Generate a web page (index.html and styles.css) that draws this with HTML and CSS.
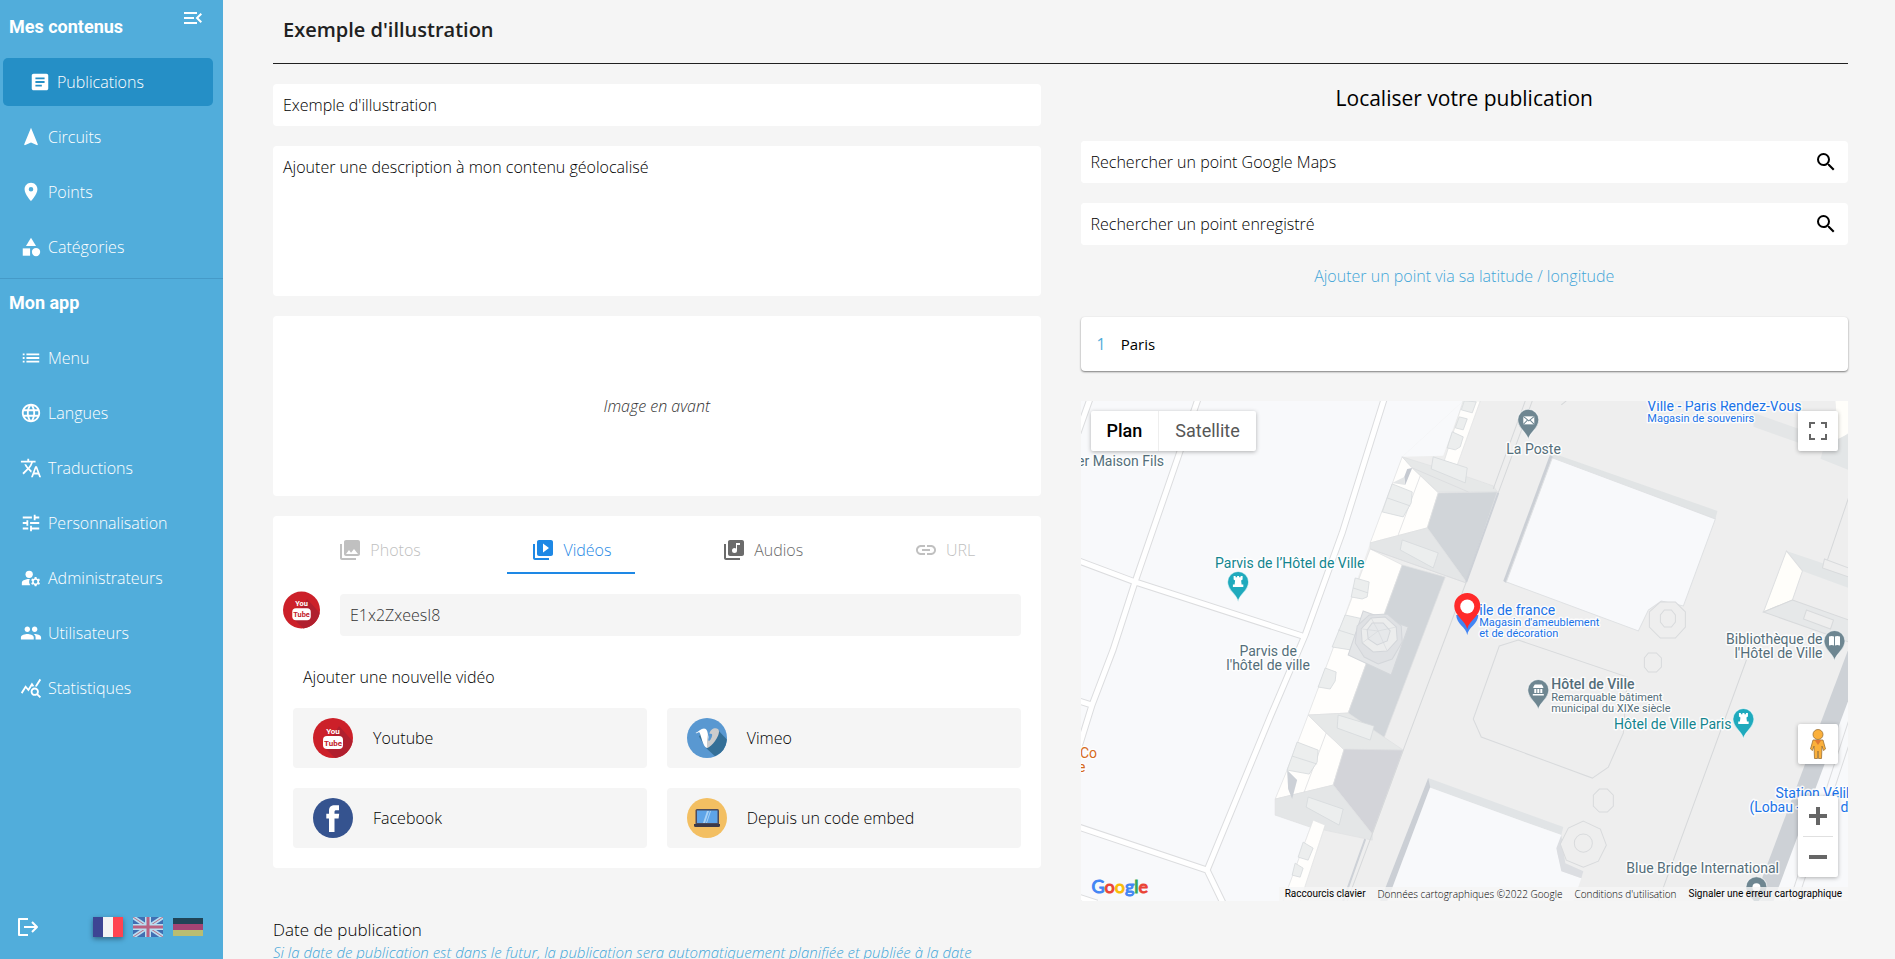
FILE: index.html
```html
<!DOCTYPE html>
<html lang="fr">
<head>
<meta charset="utf-8">
<title>Exemple d'illustration</title>
<link rel="stylesheet" href="styles.css">
</head>
<body>
<svg class="defs" aria-hidden="true">
  <symbol id="i-search" viewBox="0 0 24 24"><path d="M15.500 14h-.79l-.28-.27A6.470 6.470 0 0 0 16 9.500 6.500 6.500 0 1 0 9.500 16c1.610 0 3.090-.59 4.230-1.570l.27.28v.79l5 4.990L20.490 19l-4.990-5zm-6 0C7.010 14 5 11.990 5 9.500S7.010 5 9.500 5 14 7.010 14 9.500 11.990 14 9.500 14z"/></symbol>
  <symbol id="i-pin" viewBox="-11 -11 22 31"><path d="M0 19.500C-1.500 12-10.500 9-10.500 0a10.500 10.500 0 0 1 21 0C10.500 9 1.500 12 0 19.500z" stroke="#fff" stroke-opacity=".6"/></symbol>
  <symbol id="i-rook" viewBox="-11 -11 22 31"><use href="#i-pin" x="-11" y="-11" width="22" height="31"/><path d="M-4.500-6h2v1.300h1.500V-6h2v1.300h1.500V-6h2v3.500L3-1.500l.5 4h1.700V5h-10.400V2.500h1.700l.5-4-1.500-1z" fill="#fff"/></symbol>
</svg>
<div class="app">
  <aside class="sidebar">
    <div class="side-top">
      <h2 class="side-title">Mes contenus</h2>
      <button class="collapse" aria-label="Réduire le menu"><svg viewBox="0 0 24 24"><path d="M3 18h13v-2H3v2zm0-5h10v-2H3v2zm0-7v2h13V6H3zm18 9.590L17.420 12 21 8.410 19.590 7l-5 5 5 5L21 15.590z"/></svg></button>
    </div>
    <nav class="nav">
      <a class="nav-item active" href="#"><svg viewBox="0 0 24 24"><path d="M19 3H5c-1.100 0-2 .9-2 2v14c0 1.100.9 2 2 2h14c1.100 0 2-.9 2-2V5c0-1.100-.9-2-2-2zm-5 14H7v-2h7v2zm3-4H7v-2h10v2zm0-4H7V7h10v2z"/></svg>Publications</a>
      <a class="nav-item" href="#"><svg viewBox="0 0 24 24"><path d="M12 2L4.500 20.290l.71.71L12 18l6.790 3 .71-.71z"/></svg>Circuits</a>
      <a class="nav-item" href="#"><svg viewBox="0 0 24 24"><path d="M12 2C8.130 2 5 5.130 5 9c0 5.250 7 13 7 13s7-7.750 7-13c0-3.870-3.130-7-7-7zm0 9.500a2.500 2.500 0 0 1 0-5 2.500 2.500 0 0 1 0 5z"/></svg>Points</a>
      <a class="nav-item" href="#"><svg viewBox="0 0 24 24"><path d="M12 2l-5.500 9h11z"/><circle cx="17.500" cy="17.500" r="4.500"/><path d="M3 13.500h8v8H3z"/></svg>Catégories</a>
    </nav>
    <h2 class="side-title second">Mon app</h2>
    <nav class="nav">
      <a class="nav-item" href="#"><svg viewBox="0 0 24 24"><path d="M3 13h2v-2H3v2zm0 4h2v-2H3v2zm0-8h2V7H3v2zm4 4h14v-2H7v2zm0 4h14v-2H7v2zM7 7v2h14V7H7z"/></svg>Menu</a>
      <a class="nav-item" href="#"><svg viewBox="0 0 24 24"><path d="M11.990 2C6.470 2 2 6.480 2 12s4.470 10 9.990 10C17.520 22 22 17.520 22 12S17.520 2 11.990 2zm6.930 6h-2.950a15.650 15.650 0 0 0-1.380-3.560A8.030 8.030 0 0 1 18.920 8zM12 4.040c.83 1.200 1.480 2.530 1.910 3.960h-3.820c.43-1.430 1.080-2.760 1.910-3.960zM4.260 14a8.200 8.200 0 0 1 0-4h3.380a16.500 16.500 0 0 0 0 4H4.260zm.82 2h2.950c.32 1.250.78 2.450 1.380 3.560A7.990 7.990 0 0 1 5.080 16zm2.950-8H5.080a7.990 7.990 0 0 1 4.330-3.560A15.650 15.650 0 0 0 8.030 8zM12 19.960c-.83-1.200-1.480-2.530-1.910-3.960h3.820c-.43 1.430-1.080 2.760-1.910 3.960zM14.340 14H9.660a14.700 14.700 0 0 1 0-4h4.680a14.700 14.700 0 0 1 0 4zm.25 5.560c.6-1.110 1.060-2.310 1.380-3.560h2.950a8.030 8.030 0 0 1-4.330 3.560zM16.360 14a16.500 16.500 0 0 0 0-4h3.380a8.200 8.200 0 0 1 0 4h-3.380z"/></svg>Langues</a>
      <a class="nav-item" href="#"><svg viewBox="0 0 24 24"><path d="M12.870 15.070l-2.540-2.510.03-.03A17.520 17.520 0 0 0 14.070 6H17V4h-7V2H8v2H1v1.990h11.170C11.500 7.920 10.440 9.750 9 11.350 8.070 10.320 7.300 9.190 6.690 8h-2c.73 1.630 1.730 3.170 2.980 4.560l-5.090 5.020L4 19l5-5 3.110 3.110.76-2.040zM18.500 10h-2L12 22h2l1.120-3h4.750L21 22h2l-4.500-12zm-2.620 7l1.620-4.330L19.120 17h-3.240z"/></svg>Traductions</a>
      <a class="nav-item" href="#"><svg viewBox="0 0 24 24"><path d="M3 17v2h6v-2H3zM3 5v2h10V5H3zm10 16v-2h8v-2h-8v-2h-2v6h2zM7 9v2H3v2h4v2h2V9H7zm14 4v-2H11v2h10zm-6-4h2V7h4V5h-4V3h-2v6z"/></svg>Personnalisation</a>
      <a class="nav-item" href="#"><svg viewBox="0 0 24 24"><circle cx="10" cy="8" r="4"/><path d="M10.670 13.020C10.450 13.010 10.230 13 10 13c-2.420 0-4.680.67-6.610 1.820-.88.52-1.390 1.500-1.390 2.530V20h9.260a6.960 6.960 0 0 1-.59-6.980zM20.750 16c0-.22-.03-.42-.06-.63l1.140-1.010-1-1.730-1.450.49c-.32-.27-.68-.48-1.080-.63L18 11h-2l-.3 1.490c-.4.15-.76.36-1.080.63l-1.450-.49-1 1.730 1.140 1.010a3.700 3.700 0 0 0 0 1.260l-1.140 1.010 1 1.730 1.450-.49c.32.27.68.48 1.080.63L16 21h2l.3-1.490c.4-.15.76-.36 1.080-.63l1.450.49 1-1.730-1.140-1.010c.03-.21.06-.41.06-.63zM17 18a2 2 0 1 1 0-4 2 2 0 0 1 0 4z"/></svg>Administrateurs</a>
      <a class="nav-item" href="#"><svg viewBox="0 0 24 24"><path d="M16 11c1.660 0 2.990-1.340 2.990-3S17.660 5 16 5s-3 1.340-3 3 1.340 3 3 3zm-8 0c1.660 0 2.990-1.340 2.990-3S9.660 5 8 5 5 6.340 5 8s1.340 3 3 3zm0 2c-2.330 0-7 1.170-7 3.500V19h14v-2.500C15 14.170 10.330 13 8 13zm8 0c-.29 0-.62.02-.97.05 1.160.84 1.970 1.970 1.970 3.450V19h6v-2.500c0-2.330-4.670-3.500-7-3.500z"/></svg>Utilisateurs</a>
      <a class="nav-item" href="#"><svg viewBox="0 0 24 24"><path d="M19.880 18.470c.44-.7.700-1.510.700-2.390a4.500 4.500 0 1 0-4.500 4.500c.88 0 1.700-.26 2.390-.7L21.580 23 23 21.580l-3.120-3.110zm-3.800.11a2.500 2.500 0 1 1 0-5 2.500 2.500 0 0 1 0 5zm-.36-8.500c-.74.020-1.450.18-2.100.45l-.55-.83-3.800 6.180-3.010-3.520-3.630 5.810L1 17l5-8 3 3.500L13 6l2.720 4.080zm2.590.5c-.64-.28-1.330-.45-2.050-.49L21.380 2 23 3.180l-4.690 7.400z"/></svg>Statistiques</a>
    </nav>
    <div class="side-foot">
      <button class="logout" aria-label="Se déconnecter"><svg viewBox="0 0 22 22"><path d="M11 3H2v16h9M7 11h13M15 6l5 5-5 5" fill="none" stroke="#fff" stroke-width="2" stroke-linejoin="round"/></svg></button>
      <div class="flags">
        <button class="flag current" aria-label="Français"><svg viewBox="0 0 30 20"><path fill="#3d4593" d="M0 0h10v20H0z"/><path fill="#f3f3f3" d="M10 0h10v20H10z"/><path fill="#ff4450" d="M20 0h10v20H20z"/></svg></button>
        <button class="flag" aria-label="English"><svg viewBox="0 0 30 20"><path fill="#35479a" d="M0 0h30v20H0z"/><path d="M0 0l30 20M30 0L0 20" stroke="#fff" stroke-width="4"/><path d="M0 0l30 20M30 0L0 20" stroke="#ff4450" stroke-width="1"/><path d="M15 0v20M0 10h30" stroke="#fff" stroke-width="6"/><path d="M15 0v20M0 10h30" stroke="#ff3048" stroke-width="3"/></svg></button>
        <button class="flag" aria-label="Deutsch"><svg viewBox="0 0 30 20"><path fill="#000" d="M0 1h30v6H0z"/><path fill="#dc0030" d="M0 7h30v6H0z"/><path fill="#ffc82c" d="M0 13h30v6H0z"/></svg></button>
      </div>
    </div>
  </aside>

  <main class="main">
    <h1 class="page-title">Exemple d'illustration</h1>
    <div class="columns">
      <section class="col">
        <input class="field" type="text" aria-label="Titre" value="Exemple d'illustration">
        <textarea class="field area" aria-label="Description" placeholder="Ajouter une description à mon contenu géolocalisé"></textarea>
        <button class="cover">Image en avant</button>
        <div class="card">
          <div class="tabs" role="tablist">
            <button class="tab off" role="tab"><svg viewBox="0 0 24 24"><path d="M22 16V4c0-1.100-.9-2-2-2H8c-1.100 0-2 .9-2 2v12c0 1.100.9 2 2 2h12c1.100 0 2-.9 2-2zm-11-4l2.030 2.710L16 11l4 5H8l3-4zM2 6v14c0 1.100.9 2 2 2h14v-2H4V6H2z"/></svg>Photos</button>
            <button class="tab on" role="tab" aria-selected="true"><svg viewBox="0 0 24 24"><path d="M4 6H2v14c0 1.100.9 2 2 2h14v-2H4V6zm16-4H8c-1.100 0-2 .9-2 2v12c0 1.100.9 2 2 2h12c1.100 0 2-.9 2-2V4c0-1.100-.9-2-2-2zm-8 12.500v-9l6 4.500-6 4.500z"/></svg>Vidéos</button>
            <button class="tab" role="tab"><svg viewBox="0 0 24 24"><path d="M20 2H8c-1.100 0-2 .9-2 2v12c0 1.100.9 2 2 2h12c1.100 0 2-.9 2-2V4c0-1.100-.9-2-2-2zm-2 5h-3v5.500a2.500 2.500 0 1 1-2.500-2.500c.57 0 1.080.19 1.500.51V5h4v2zM4 6H2v14c0 1.100.9 2 2 2h14v-2H4V6z"/></svg>Audios</button>
            <button class="tab off" role="tab"><svg viewBox="0 0 24 24"><path d="M3.900 12c0-1.710 1.390-3.100 3.100-3.100h4V7H7c-2.760 0-5 2.240-5 5s2.240 5 5 5h4v-1.900H7c-1.710 0-3.100-1.390-3.100-3.100zM8 13h8v-2H8v2zm9-6h-4v1.900h4c1.710 0 3.100 1.390 3.100 3.100s-1.390 3.100-3.100 3.100h-4V17h4c2.760 0 5-2.240 5-5s-2.240-5-5-5z"/></svg>URL</button>
          </div>
          <div class="video-row">
            <svg class="video-logo" viewBox="0 0 40 40" role="img" aria-label="Youtube"><circle cx="20" cy="20" r="20" fill="#cc2029"/><path d="M26 8L39.500 23A20 20 0 0 1 22 39.900L12 30Z" fill="#b01f2e"/><text x="20" y="16" text-anchor="middle" class="yt-word" fill="#fff">You</text><rect x="10" y="18" width="20" height="13" rx="4" fill="#fff"/><text x="20" y="28" text-anchor="middle" class="yt-word" fill="#c3202c">Tube</text></svg>
            <input class="field muted" type="text" aria-label="Identifiant de la vidéo" value="E1x2ZxeesI8">
          </div>
          <h3 class="add-title">Ajouter une nouvelle vidéo</h3>
          <div class="sources">
            <button class="source"><svg viewBox="0 0 40 40" aria-hidden="true"><circle cx="20" cy="20" r="20" fill="#cc2029"/><path d="M26 8L39.500 23A20 20 0 0 1 22 39.900L12 30Z" fill="#b01f2e"/><text x="20" y="16" text-anchor="middle" class="yt-word" fill="#fff">You</text><rect x="10" y="18" width="20" height="13" rx="4" fill="#fff"/><text x="20" y="28" text-anchor="middle" class="yt-word" fill="#c3202c">Tube</text></svg>Youtube</button>
            <button class="source"><svg viewBox="0 0 40 40"><circle cx="20" cy="20" r="20" fill="#5998d1"/><path d="M30 11L39.900 21.500A20 20 0 0 1 28 38.300L18.500 29.500Z" fill="#346f97"/><path d="M20 12l-3-1.500-5 8 6 10h3z" fill="#346f97"/><path d="M8.500 15c3-1.500 5.500-4.500 8.500-4.500 3.500 0 3.500 4 4.500 8.500l-1.500 11c-4-.5-6-13-7.500-15.500-.7-.7-1.500 0-2.700.8z" fill="#fff"/><path d="M20 15.500v14.500c3 0 12-10 12-16.500 0-5-9-4-9.500 2.500 3-1 3.500 1 1.500 4.500-1.200 2.200-2.500 3.500-3 1-.4-2-.6-4-1-6z" fill="#ccc"/></svg>Vimeo</button>
            <button class="source"><svg viewBox="0 0 40 40"><circle cx="20" cy="20" r="20" fill="#35538f"/><path d="M16 34V20.500h-2.700v-4.800H16v-3.200C16 9 18 7.300 22 7.300h4v5h-2.700c-1.300 0-1.800.5-1.800 1.700v1.700h4.700l-.6 4.800h-4.100V34z" fill="#fff"/></svg>Facebook</button>
            <button class="source"><svg viewBox="0 0 40 40"><circle cx="20" cy="20" r="20" fill="#f3bf62"/><rect x="8.500" y="11" width="23.500" height="16" rx="1.500" fill="#4d4b5b"/><path d="M10 12.500h20.500v12.500H10z" fill="#5ea4e8"/><path d="M20 13l-4 12h2l4-12zM23 13l-4 12h1l4-12z" fill="#a9d2f6"/><path d="M7 26h26v1.500a1.500 1.500 0 0 1-1.500 1.500h-23A1.500 1.500 0 0 1 7 27.500z" fill="#3b3a4a"/></svg>Depuis un code embed</button>
          </div>
        </div>
        <div class="date">
          <h3 class="date-title">Date de publication</h3>
          <p class="date-help">Si la date de publication est dans le futur, la publication sera automatiquement planifiée et publiée à la date</p>
        </div>
      </section>

      <section class="col locate">
        <h2 class="locate-title">Localiser votre publication</h2>
        <div class="search"><input class="field" type="text" aria-label="Rechercher un point Google Maps" placeholder="Rechercher un point Google Maps"><button aria-label="Rechercher"><svg><use href="#i-search"/></svg></button></div>
        <div class="search"><input class="field" type="text" aria-label="Rechercher un point enregistré" placeholder="Rechercher un point enregistré"><button aria-label="Rechercher"><svg><use href="#i-search"/></svg></button></div>
        <a class="latlng" href="#">Ajouter un point via sa latitude / longitude</a>
        <div class="point"><span class="point-num">1</span><span>Paris</span></div>
        <div class="map">
          <svg class="map-canvas" viewBox="0 0 767 500" preserveAspectRatio="xMidYMid slice">
            <rect width="767" height="500" fill="#f8f9fb"/>
            <g fill="none" stroke="#dcdddf" stroke-width="7">
              <path d="M9-2L-3 32M117-2L54 181 32 249 11 304-2 346M303-2L261 132 224 234 189 316 126 469 142 502M-2 160L54 181 221 235M-2 300L11 304M-2 426L126 469M-2 496L16 502"/>
            </g>
            <path d="M9-2L-3 32M117-2L54 181 32 249 11 304-2 346M303-2L261 132 224 234 189 316 126 469 142 502M-2 160L54 181 221 235M-2 300L11 304M-2 426L126 469M-2 496L16 502" fill="none" stroke="#fff" stroke-width="5"/>
            <path d="M382 0L321 56 289 142 251 249 227 314 206 369 194 398V414L229 426 202 500H692L767 290V0z" fill="#eee"/>
            <path d="M382 0L362 55 321 56z" fill="#f8f9fb"/>
            <!-- street east of the building -->
            <path d="M767 299L692 500H767z" fill="#f8f9fb"/>
            <path d="M767 320L708 500M767 345L716 500" stroke="#dcdddf"/>
            <path d="M767 248L672 500H692L767 299z" fill="#cdd1d6"/>
            <!-- west wing walls -->
            <g stroke="#dfe1e3" stroke-width=".7">
              <path d="M382 0H399L376 64 363 60z" fill="#fffefc"/>
              <path d="M321 56L331 67 357 92 346 127 289 142z" fill="#fffefc"/>
              <path d="M321 56L350 65 386 76 412 85 416 91H357L331 67z" fill="#e6e8e8"/>
              <path d="M357 92L416 91 385 181 346 127z" fill="#d1d5d9"/>
              <path d="M289 142L346 127 385 181V182L289 148z" fill="#e4e6e7"/>
              <path d="M289 148L321 164 267 312 227 314z" fill="#fffefc"/>
              <path d="M321 164L364 176 302 339 267 312z" fill="#d1d5d9"/>
              <path d="M227 314L245 332 263 348 252 384 194 398 206 369z" fill="#fffefc"/>
              <path d="M227 314L267 312 322 349H263z" fill="#e6e8e8"/>
              <path d="M263 348L322 349 291 433 252 384z" fill="#d3d4d9"/>
              <path d="M194 398L252 384 291 433V439L229 426 194 414z" fill="#e4e6e7"/>
              <path d="M232 419L244 424 219 500H202z" fill="#fffefc"/>
              <path d="M339 75L317 134M245 332L223 391M331 67L387 91M289 148L385 182" fill="none" stroke="#d8dadc"/>
            </g>
            <path d="M326 68L331 67 324 84 323 76z" fill="#c6cad1"/>
            <path d="M323 76L324 84 311 82z" fill="#e4e6e7"/>
            <path d="M206 369L216 379 211 398 207 388z" fill="#cdd1d7"/>
            <g fill="#eceeee" stroke="#d6d9dc" stroke-width=".8">
              <path d="M311 83L331 91 330 102 322 116 301 111zM306 97L329 105"/>
              <path d="M352 56L386 67 384 82 350 68z"/>
              <path d="M321 139L357 152 352 167 319 149z"/>
              <path d="M274 177L288 181 286 196 281 198 270 196zM272 187L287 192"/>
              <path d="M264 214L282 218 270 249 251 246zM257 229L276 235"/>
              <path d="M244 267L255 271 254 280 249 288 237 286z"/>
              <path d="M216 341L237 349 236 361 228 373 206 369zM211 355L236 363"/>
              <path d="M257 314L293 325 289 339 256 327z"/>
              <path d="M227 396L262 408 258 424 225 406z"/>
              <path d="M222 441L232 447 227 459 217 456z"/>
              <path d="M214 462L222 467 219 476 211 474z"/>
              <path d="M383 0L395 1 391 12 380 9zM378 16L386 18 382 29 374 27zM371 31L382 36 379 46 374 49 366 47z"/>
            </g>
            <!-- dome -->
            <g stroke="#d3d6da">
              <path d="M282 210L327 226 310 274 267 254z" fill="#e4e6e8"/>
              <path d="M288 214L306 213 320 225 321 241 311 258 297 263 283 256 274 242 276 225z" fill="#dfe1e4"/>
              <path d="M290 217L304 216 315 226 316 239 306 250 292 251 281 242 280 228z" fill="#eceded"/>
              <path d="M291 222H302L309 230 306 240 296 244 287 238 286 229z" fill="#e6e8ea"/>
              <path d="M297 230L281 228M297 230L290 217M297 230L315 226M297 230L306 250M297 230L281 242" stroke-width=".6"/>
            </g>
            <path d="M385 181L322 349 291 433 266 500M444 0L412 88M451 0L417 92M665 259L577 500M767 97L746 159M480 4L485 0" fill="none" stroke="#d6d8da"/>
            <path d="M284 438L262 500M417 92L385 181" stroke="#cdd1d7" stroke-width="2"/>
            <!-- courtyards -->
            <path d="M470 52L636 110 634 118 470 57z" fill="#e1e4e5"/>
            <path d="M469 53L472 57 425 182 422 180z" fill="#cbcfd5"/>
            <path d="M471 57L634 118 602 205 580 200 567 209 557 230 425 181z" fill="#f8f9fb" stroke="#dfe1e3"/>
            <path d="M347 377L482 426 480 434 347 386z" fill="#e1e4e6"/>
            <path d="M347 386L480 434 476 452 481 470 500 477 492 500H303z" fill="#f8f9fb"/>
            <path d="M347 377L349 386 306 500H299z" fill="#cbcfd5"/>
            <path d="M480 434L475 447 480 470 500 477 502 470 484 462z" fill="#dcdee2"/>
            <g fill="#eee" stroke="#d8dadc">
              <path d="M579 201H594L604 211V226L594 237H579L568 226V211z"/><path d="M583 209H590L594 214V221L590 226H583L579 221V214z"/>
              <path d="M502 420L519 428 525 444 517 460 502 466 485 459 479 443 487 427z"/><circle cx="502" cy="442" r="9"/>
              <path d="M567 252H575L580 257V266L575 271H567L563 266V257z"/><path d="M518 388H526L532 394V405L526 411H518L512 405V394z"/>
              <path d="M418 245L437 239 546 276 542 332 527 366 511 377 400 336 392 318z"/>
            </g>
            <!-- north-east buildings -->
            <path d="M672 12L720 29V43L672 26z" fill="#e4e6e7"/>
            <path d="M754 0H767V32L757 40z" fill="#fffefa"/>
            <path d="M757 38L767 33V69L739 58 742 48z" fill="#e3e6e7"/>
            <path d="M705 150L767 171V187L721 170z" fill="#e3e6e7"/>
            <path d="M705 150L721 170 711 199 682 211z" fill="#fffefa" stroke="#dddfe1"/>
            <path d="M711 199L767 219V241L682 211z" fill="#e6e8e9" stroke="#d8dadc"/>
            <path d="M725 209L752 219 749 228 722 218zM743 158L767 167V176L741 167z" fill="#eee" stroke="#d8dadc"/>

            <g class="lbl">
              <text x="83" y="65" text-anchor="end">er Maison Fils</text>
              <text x="425" y="53">La Poste</text>
              <text x="187" y="255" text-anchor="middle">Parvis de</text>
              <text x="187" y="269" text-anchor="middle">l'hôtel de ville</text>
              <text x="741" y="243" text-anchor="end">Bibliothèque de</text>
              <text x="741" y="257" text-anchor="end">l'Hôtel de Ville</text>
              <text x="545" y="472">Blue Bridge International</text>
              <text class="strong" x="470" y="288">Hôtel de Ville</text>
              <text class="small" x="470" y="300">Remarquable bâtiment</text>
              <text class="small" x="470" y="311">municipal du XIXe siècle</text>
            </g>
            <g class="lbl teal">
              <text x="134" y="167">Parvis de l’Hôtel de Ville</text>
              <text x="650" y="328" text-anchor="end">Hôtel de Ville Paris</text>
            </g>
            <g class="lbl blue">
              <text x="566" y="10">Ville - Paris Rendez-Vous</text>
              <text class="small" x="566" y="21">Magasin de souvenirs</text>
              <text x="398" y="214">ile de france</text>
              <text class="small" x="398" y="225">Magasin d'ameublement</text>
              <text class="small" x="398" y="236">et de décoration</text>
              <text x="694" y="397">Station Vélib'</text>
              <text x="668" y="411">(Lobau - Hôtel de</text>
            </g>
            <g class="lbl orange"><text x="-1" y="357">Co</text><text x="-3" y="371">e</text></g>

            <use href="#i-rook" x="146" y="170" width="22" height="31" fill="#1faabd"/>
            <use href="#i-rook" x="651" y="307" width="22" height="31" fill="#1faabd"/>
            <g fill="#6e8691">
              <use href="#i-pin" x="436" y="8" width="22" height="31"/>
              <use href="#i-pin" x="742" y="229" width="22" height="31"/>
              <use href="#i-pin" x="446" y="278" width="22" height="31"/>
              <use href="#i-pin" x="664" y="475" width="22" height="31"/>
            </g>
            <path d="M442 15.500h11v8h-11z" fill="#fff"/><path d="M442 15.500l5.500 4.500 5.500-4.500M442 23.500l4-4M453 23.500l-4-4" stroke="#6e8691" fill="none"/>
            <path d="M747.500 235.500q3-1 5 0v9q-2-1-5 0zM753.500 235.500q2-1 5 0v9q-3-1-5 0z" fill="#fff"/>
            <path d="M452 286l1.500-2.500h7L462 286v1h-10zM453 288h2v4h-2zM456 288h2v4h-2zM459 288h2v4h-2zM451.500 293h11v1.500h-11z" fill="#fff"/>
            <circle cx="675" cy="486" r="4" fill="#fff"/>
            <path d="M386 234c-1-8-11-11-11-20h22c0 9-10 12-11 20z" fill="#4285f4"/>
            <path d="M386 228c-2-9-13-13-13-23a13 13 0 0 1 26 0c0 10-11 14-13 23z" fill="#ff2a2a"/><circle cx="386" cy="205.500" r="7" fill="#fff"/>
          </svg>
          <div class="map-type">
            <button class="selected">Plan</button><button>Satellite</button>
          </div>
          <button class="map-btn full" aria-label="Plein écran"><svg viewBox="0 0 18 18"><path d="M0 0v6h2V2h4V0zM18 0h-6v2h4v4h2zM16 16h-4v2h6v-6h-2zM2 12H0v6h6v-2H2z"/></svg></button>
          <div class="map-side">
            <button class="map-btn" aria-label="Street View"><svg class="pegman" viewBox="0 0 18 30"><g fill="#fbb03b" stroke="#9a7136" stroke-width=".8"><path d="M4 11h10l2.500 9-2 1.500L13 17l-.5 12.500h-3L9 22l-.5 7.500h-3L5 17l-1.500 4.500-2-1.500z"/><circle cx="9" cy="5.500" r="5"/></g><path d="M5.500 11h7L9 16z" fill="#e27a33"/></svg></button>
            <div class="zoom">
              <button aria-label="Zoom avant"><svg viewBox="0 0 18 18"><path d="M7 0h4v7h7v4h-7v7H7v-7H0V7h7z"/></svg></button>
              <button aria-label="Zoom arrière"><svg viewBox="0 0 18 18"><path d="M0 7h18v4H0z"/></svg></button>
            </div>
          </div>
          <a class="google" href="#" aria-label="Google"><span class="g1">G</span><span class="g2">o</span><span class="g3">o</span><span class="g1">g</span><span class="g4">l</span><span class="g2">e</span></a>
          <div class="map-foot">
            <button>Raccourcis clavier</button><span class="open">Données cartographiques ©2022 Google</span><a class="open" href="#">Conditions d'utilisation</a><a href="#">Signaler une erreur cartographique</a>
          </div>
        </div>
      </section>
    </div>
  </main>
</div>
</body>
</html>
```
FILE: styles.css
```css
* { box-sizing: border-box; }
body { margin: 0; font: 300 16px/22px "Open Sans", sans-serif; color: #000; background: #f5f5f5; }
h1, h2, h3, p { margin: 0; font-size: 16px; font-weight: 300; }
button, input, textarea { font: inherit; color: inherit; border: 0; background: none; padding: 0; margin: 0; }
button { cursor: pointer; }
a { text-decoration: none; color: inherit; }
svg { display: block; fill: currentColor; flex: none; }
.defs { position: absolute; width: 0; height: 0; }
.yt-word { font: 700 8px Roboto, sans-serif; }

.app { display: flex; height: 100vh; overflow: hidden; }

.sidebar { width: 223px; flex: none; display: flex; flex-direction: column; background: #51addb; color: #fff; }
.side-top { display: flex; justify-content: space-between; height: 55px; padding: 3px 18px 0 9px; }
.side-title { font: 700 18px/48px Roboto, sans-serif; }
.side-title.second { padding-left: 9px; border-top: 1px solid #459ac8; margin-top: 4px; height: 52px; }
.collapse { align-self: flex-start; width: 24px; height: 24px; margin-top: 3px; }
.nav { display: flex; flex-direction: column; }
.nav-item { display: flex; align-items: center; gap: 6px; height: 55px; padding-left: 20px; }
.nav-item svg { width: 22px; height: 22px; }
.nav-item.active { height: 48px; margin: 3px 10px 3px 3px; padding-left: 26px; background: #258fc6; border-radius: 5px; }
.side-foot { display: flex; justify-content: space-between; align-items: center; margin-top: auto; padding: 0 20px 21px 17px; }
.logout svg { width: 22px; height: 22px; }
.flags { display: flex; gap: 10px; }
.flag { opacity: .6; }
.flag svg { width: 30px; height: 20px; }
.flag.current { opacity: 1; box-shadow: 0 2px 5px rgba(0, 0, 0, .4); }

.main { flex: 1; min-width: 0; padding: 0 47px 0 50px; }
.page-title { padding: 0 10px; height: 64px; font-size: 20px; line-height: 60px; font-weight: 600; color: #212121; border-bottom: 1px solid #212121; }
.columns { display: grid; grid-template-columns: minmax(0, 1fr) minmax(0, 1fr); gap: 40px; padding-top: 20px; }
.col { display: flex; flex-direction: column; gap: 20px; min-width: 0; }

.field { display: block; width: 100%; height: 42px; padding: 0 10px; background: #fff; border-radius: 4px; }
.field::placeholder { color: #000; opacity: 1; }
.area { height: 150px; padding: 10px; resize: none; }
.cover { height: 180px; background: #fff; border-radius: 4px; font-style: italic; color: #333; }

.card { padding: 10px 10px 20px; background: #fff; border-radius: 4px; }
.tabs { display: flex; justify-content: space-around; }
.tab { display: flex; align-items: center; gap: 8px; height: 48px; padding: 0 24px; color: #6b6b6b; }
.tab svg { width: 24px; height: 24px; }
.tab.on { color: #1e88e5; box-shadow: inset 0 -2px #1e88e5; }
.tab.off { color: #c0c0c0; }
.video-row { display: flex; gap: 20px; padding: 17px 10px 0 0; }
.video-logo { width: 37px; height: 38px; }
.video-row .field { margin-top: 3px; background: #f5f5f5; }
.muted { color: #333; }
.add-title { padding: 30px 20px 20px; }
.sources { display: grid; grid-template-columns: 1fr 1fr; gap: 20px; padding: 0 10px; }
.source { display: flex; align-items: center; gap: 20px; height: 60px; padding: 0 20px; background: #f5f5f5; border-radius: 4px; }
.source svg { width: 40px; height: 40px; }
.date { padding-top: 31px; }
.date-title { font-size: 17px; }
.date-help { color: #42a5d8; font-size: 15px; font-style: italic; }

.locate-title { font-size: 21px; line-height: 28px; font-weight: 400; text-align: center; padding-bottom: 9px; }
.search { display: flex; background: #fff; border-radius: 4px; }
.search button { width: 46px; display: grid; place-items: center; }
.search svg { width: 24px; height: 24px; }
.latlng { align-self: center; color: #42a5d8; line-height: 22px; }
.point { display: flex; align-items: center; gap: 15px; height: 54px; padding: 0 16px; margin-top: 10px; background: #fff; border-radius: 4px; box-shadow: 0 1px 2px rgba(0, 0, 0, .5); font-size: 15px; font-weight: 500; }
.point-num { color: #51addb; font-size: 16px; font-weight: 400; }

.map { position: relative; height: 500px; margin-top: 10px; overflow: hidden; font-family: Roboto, sans-serif; font-weight: 400; }
.map-canvas { width: 100%; height: 100%; }
.lbl { font: 400 14px Roboto, sans-serif; fill: #546e7a; stroke: #fff; stroke-width: 3px; stroke-opacity: .85; stroke-linejoin: round; paint-order: stroke; }
.lbl .small { font-size: 11px; }
.lbl .strong { font-weight: 500; }
.teal { fill: #12858f; }
.blue { fill: #1a73e8; }
.orange { fill: #d66a1a; }
.map-type { position: absolute; left: 10px; top: 10px; display: flex; background: #fff; border-radius: 2px; box-shadow: 0 1px 4px rgba(0, 0, 0, .3); }
.map-type button { height: 40px; padding: 0 16px; font-size: 18px; color: #565656; }
.map-type .selected { font-weight: 500; color: #000; border-right: 1px solid #eee; }
.map-btn { width: 40px; height: 40px; display: grid; place-items: center; background: #fff; border-radius: 2px; box-shadow: 0 1px 4px rgba(0, 0, 0, .3); color: #666; }
.map-btn svg, .zoom svg { width: 18px; height: 18px; }
.map-btn .pegman { width: 18px; height: 30px; }
.full { position: absolute; top: 10px; right: 10px; }
.map-side { position: absolute; right: 10px; bottom: 24px; display: grid; gap: 32px; }
.zoom { width: 40px; background: #fff; border-radius: 2px; box-shadow: 0 1px 4px rgba(0, 0, 0, .3); color: #666; }
.zoom button { width: 30px; height: 40px; margin: 0 5px; display: grid; place-items: center; }
.zoom button + button { border-top: 1px solid #e0e0e0; height: 41px; }
.google { position: absolute; left: 11px; bottom: 3px; font: 400 18px/24px Lato, sans-serif; -webkit-text-stroke: 1px; }
.g1 { color: #4285f4; } .g2 { color: #ea4335; } .g3 { color: #fbbc05; } .g4 { color: #34a853; }
.map-foot { position: absolute; right: 0; bottom: 0; display: flex; font-size: 10px; line-height: 14px; }
.map-foot > * { padding: 0 6px; background: rgba(245, 245, 245, .8); }
.map-foot .open { font-family: "Open Sans", sans-serif; font-weight: 300; }
```
